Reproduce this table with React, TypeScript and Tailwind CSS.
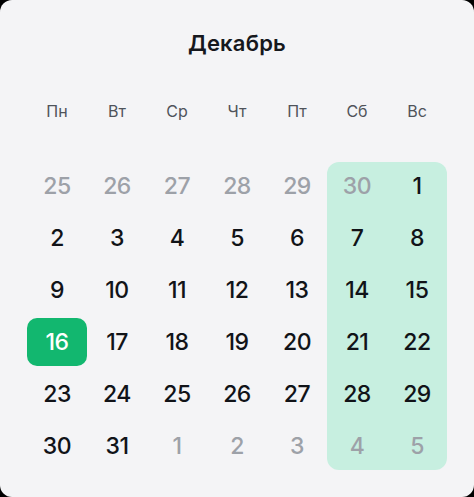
const weekDays = ["Пн", "Вт", "Ср", "Чт", "Пт", "Сб", "Вс"];

type Day = { n: number; muted?: boolean };

const weeks: Day[][] = [
    [{ n: 25, muted: true }, { n: 26, muted: true }, { n: 27, muted: true }, { n: 28, muted: true }, { n: 29, muted: true }, { n: 30, muted: true }, { n: 1 }],
    [2, 3, 4, 5, 6, 7, 8].map((n) => ({ n })),
    [9, 10, 11, 12, 13, 14, 15].map((n) => ({ n })),
    [16, 17, 18, 19, 20, 21, 22].map((n) => ({ n })),
    [23, 24, 25, 26, 27, 28, 29].map((n) => ({ n })),
    [{ n: 30 }, { n: 31 }, { n: 1, muted: true }, { n: 2, muted: true }, { n: 3, muted: true }, { n: 4, muted: true }, { n: 5, muted: true }],
];

const today = 16;

function DayCell({ day, isFirstRow }: { day: Day; isFirstRow: boolean }) {
    const isToday = day.n === today && !day.muted && !isFirstRow;
    return (
        <div className="h-[52px] flex items-center justify-center">
            <div
                className={
                    isToday
                        ? "w-[60px] h-[48px] rounded-[10px] bg-[#12b76f] text-white flex items-center justify-center"
                        : `flex items-center justify-center ${day.muted ? "text-[#9da1a8]" : "text-[#111318]"}`
                }
            >
                {day.n}
            </div>
        </div>
    );
}

function App() {
    return (
        <div className="w-[474px] h-[497px] bg-black">
            <div
                className="w-[474px] h-[497px] rounded-[12px] bg-[#f4f4f6] flex flex-col items-center"
                style={{ fontFamily: "Inter, 'Noto Sans', sans-serif" }}
            >
                <h1 className="mt-[29px] text-[22px] leading-[28px] font-semibold text-[#16181d] tracking-[0.2px]">
                    Декабрь
                </h1>

                <div className="mt-[44px] grid grid-cols-7 w-[420px]">
                    {weekDays.map((d) => (
                        <div key={d} className="text-center text-[16px] leading-[20px] text-[#4f535a]">
                            {d}
                        </div>
                    ))}
                </div>

                <div className="mt-[39px] flex items-start w-[420px] text-[23px] font-medium tracking-[-0.5px]">
                    <div className="grid grid-cols-5 w-[300px]">
                        {weeks.map((w, wi) =>
                            w.slice(0, 5).map((day, di) => (
                                <DayCell key={`${wi}-${di}`} day={day} isFirstRow={wi === 0} />
                            ))
                        )}
                    </div>
                    <div className="w-[120px] my-[2px] bg-[#c7efe0] rounded-[12px]">
                        <div className="grid grid-cols-2 -my-[2px]">
                            {weeks.map((w, wi) =>
                                w.slice(5).map((day, di) => (
                                    <DayCell key={`${wi}-w${di}`} day={day} isFirstRow={wi === 0} />
                                ))
                            )}
                        </div>
                    </div>
                </div>
            </div>
        </div>
    );
}

export default App
